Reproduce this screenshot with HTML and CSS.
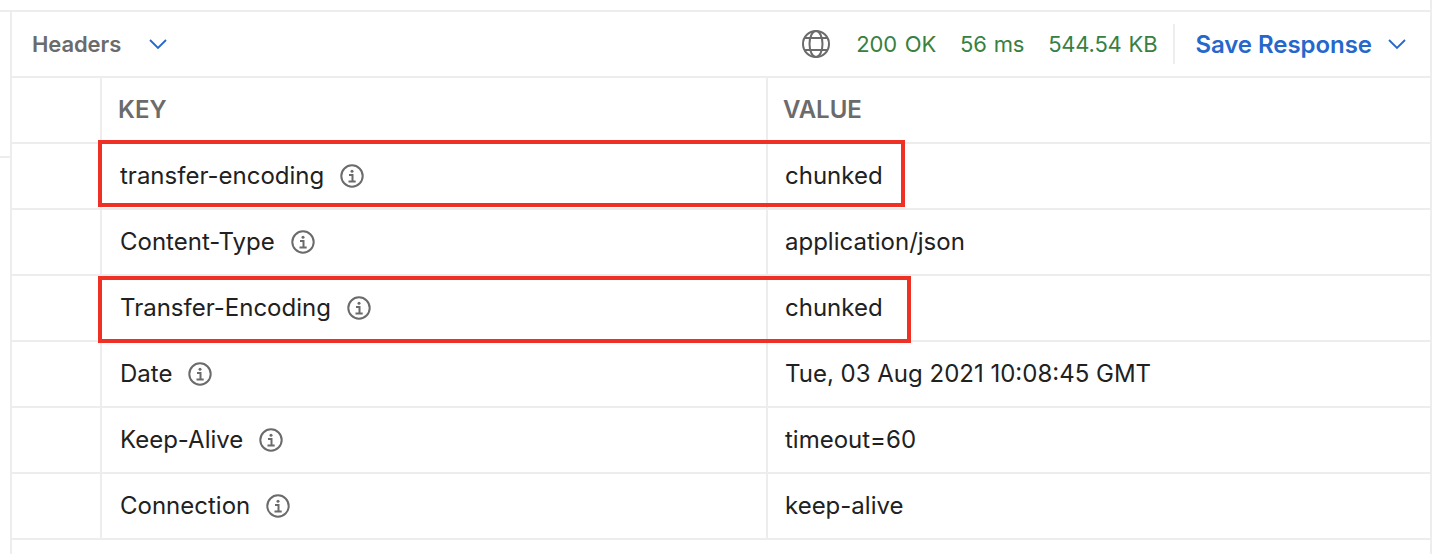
FILE: index.html
```html
<!DOCTYPE html>
<html lang="en">
  <head>
    <meta charset="UTF-8" />
    <title>Headers</title>
    <link rel="stylesheet" href="styles.css">
  </head>
  <body>
    <svg class="sprites" width="0" height="0">
      <symbol id="info" viewBox="0 0 24 24">
        <circle cx="12" cy="12" r="10.7" fill="none" stroke="currentColor" stroke-width="2" />
        <circle cx="12" cy="7.2" r="1.5" fill="currentColor" />
        <path d="M9 10.9h3.5v6.3M8.5 17.4h7.2" fill="none" stroke="currentColor" stroke-width="2" />
      </symbol>
      <symbol id="chevron" viewBox="0 0 18 12">
        <path d="M1 2l8 8 8-8" fill="none" stroke="currentColor" stroke-width="1.8" />
      </symbol>
    </svg>
    <div class="page">
      <div class="side"><span class="side-stub"></span></div>
      <div class="panel">
        <div class="panel-inner">
          <div class="bar">
            <div class="tab">
              <span>Headers</span>
              <svg class="chevron"><use href="#chevron" /></svg>
            </div>
            <div class="status">
              <svg class="globe" viewBox="0 0 30 30" fill="none" stroke="currentColor" stroke-width="2">
                <circle cx="15" cy="15" r="13" />
                <ellipse cx="15" cy="15" rx="6.5" ry="13" />
                <path d="M4 9h22M4 21h22" />
              </svg>
              <span class="ok first">200 OK</span>
              <span class="ok">56 ms</span>
              <span class="ok last">544.54 KB</span>
              <span class="sep"></span>
              <span class="save">Save Response</span>
              <svg class="chevron"><use href="#chevron" /></svg>
            </div>
          </div>
          <div class="table">
            <div class="row head">
              <div class="gutter"></div>
              <div class="key">KEY</div>
              <div class="val">VALUE</div>
            </div>
            <div class="row">
              <div class="gutter"></div>
              <div class="key">transfer-encoding <svg class="info"><use href="#info" /></svg></div>
              <div class="val">chunked</div>
            </div>
            <div class="row">
              <div class="gutter"></div>
              <div class="key">Content-Type <svg class="info"><use href="#info" /></svg></div>
              <div class="val">application/json</div>
            </div>
            <div class="row">
              <div class="gutter"></div>
              <div class="key">Transfer-Encoding <svg class="info"><use href="#info" /></svg></div>
              <div class="val">chunked</div>
            </div>
            <div class="row">
              <div class="gutter"></div>
              <div class="key">Date <svg class="info"><use href="#info" /></svg></div>
              <div class="val">Tue, 03 Aug 2021 10:08:45 GMT</div>
            </div>
            <div class="row">
              <div class="gutter"></div>
              <div class="key">Keep-Alive <svg class="info"><use href="#info" /></svg></div>
              <div class="val">timeout=60</div>
            </div>
            <div class="row">
              <div class="gutter"></div>
              <div class="key">Connection <svg class="info"><use href="#info" /></svg></div>
              <div class="val">keep-alive</div>
            </div>
            <div class="mark mark-a"></div>
            <div class="mark mark-b"></div>
          </div>
        </div>
      </div>
    </div>
  </body>
</html>
```

FILE: styles.css
```css
html,
body {
  margin: 0;
  height: 100%;
  overflow: hidden;
  background: #fff;
}
body {
  font-family: Inter, 'Liberation Sans', sans-serif;
  font-size: 24px;
  color: #212121;
}
.sprites {
  display: block;
}
.page {
  display: flex;
  height: 554px;
  padding-right: 8px;
  box-sizing: border-box;
}
.side {
  width: 10px;
  flex: none;
  margin-top: 10px;
  border-top: 2px solid #ededed;
}
.side-stub {
  display: block;
  height: 2px;
  margin-top: 144px;
  background: #ededed;
}
.panel {
  flex: 1;
  display: flex;
  padding-top: 10px;
  border-right: 2px solid #ededed;
}
.panel-inner {
  flex: 1;
  border-top: 2px solid #ededed;
  border-left: 2px solid #ededed;
}
.bar {
  display: flex;
  height: 64px;
  justify-content: space-between;
  align-items: center;
  border-bottom: 2px solid #ededed;
  padding: 0 24px 0 20px;
}
.tab {
  display: flex;
  align-items: center;
  gap: 28px;
  color: #6b6b6b;
  font-size: 22px;
  font-weight: 600;
  letter-spacing: -0.1px;
}
.chevron {
  width: 18px;
  height: 12px;
  color: #2667cc;
}
.status {
  display: flex;
  align-items: center;
}
.globe {
  width: 30px;
  height: 30px;
  margin-right: 25px;
  color: #6b6b6b;
}
.ok {
  color: #38803f;
  font-size: 22px;
  margin-right: 24px;
  word-spacing: 1px;
  letter-spacing: -0.2px;
}
.ok.first {
  word-spacing: 2px;
}
.ok.last {
  margin-right: 16px;
}
.sep {
  width: 2px;
  height: 40px;
  margin-right: 20px;
  background: #ededed;
}
.save {
  color: #2667cc;
  font-size: 24px;
  font-weight: 600;
  letter-spacing: -0.05px;
  margin-right: 16px;
}
.table {
  position: relative;
}
.row {
  display: flex;
  height: 64px;
  border-bottom: 2px solid #ededed;
  align-items: center;
}
.gutter {
  width: 88px;
  height: 100%;
  flex: none;
}
.key,
.val {
  display: flex;
  align-items: center;
  height: 100%;
  box-sizing: border-box;
  border-left: 2px solid #ededed;
  padding-bottom: 2px;
  gap: 16px;
}
.key {
  width: 666px;
  flex: none;
  padding-left: 18px;
}
.val {
  flex: 1;
  padding-left: 17px;
}
.head .key,
.head .val {
  color: #6b6b6b;
  font-weight: 600;
}
.head .key {
  padding-left: 16px;
}
.head .val {
  padding-left: 15px;
}
.info {
  width: 24px;
  height: 24px;
  margin-top: 2px;
  color: #6b6b6b;
}
/* red boxes drawn over the screenshot */
.mark {
  position: absolute;
  left: 86px;
  height: 67px;
  box-sizing: border-box;
  border: 4px solid #ee3124;
}
.mark-a {
  top: 62px;
  width: 807px;
}
.mark-b {
  top: 198px;
  width: 813px;
}
```
